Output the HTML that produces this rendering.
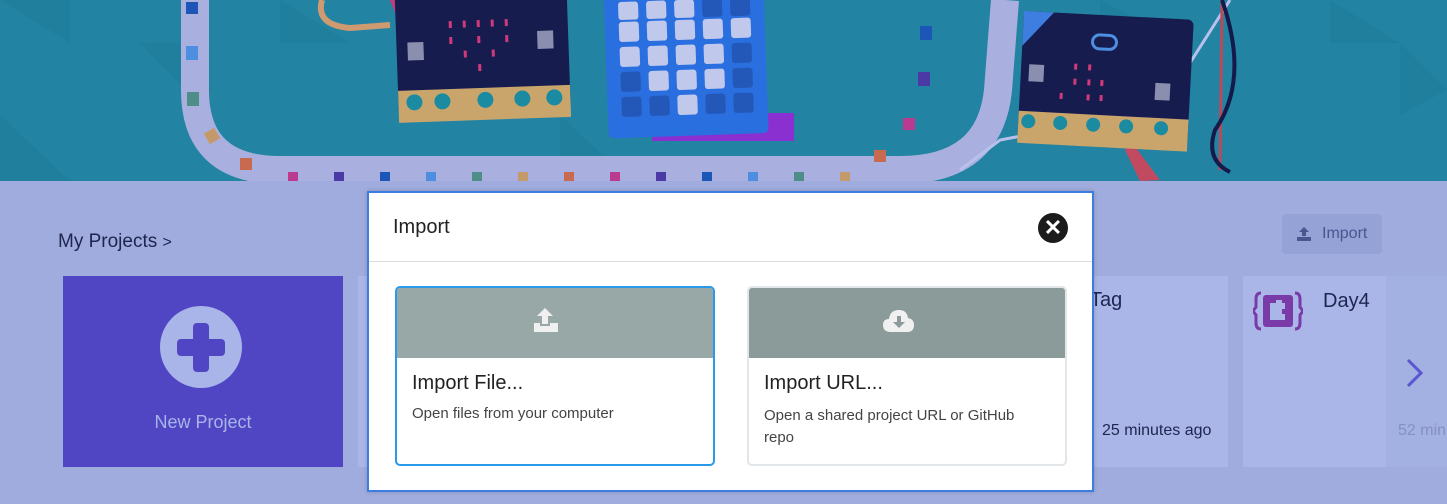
<!DOCTYPE html>
<html><head><meta charset="utf-8"><style>
*{margin:0;padding:0;box-sizing:border-box}
body{width:1447px;height:504px;overflow:hidden;background:#a0acdd;font-family:"Liberation Sans",sans-serif;position:relative}
.abs{position:absolute}
</style></head><body>
<svg class="abs" style="left:0;top:0" width="1447" height="181" viewBox="0 0 1447 181">
<rect width="1447" height="181" fill="#2284a2"/>
<g fill="#1f7e9b" opacity="0.8">
<path d="M0 0 L70 0 L70 43Z M140 43 L210 43 L210 115Z M1330 0 L1400 43 L1330 43Z M1400 43 L1447 90 L1400 115Z M560 115 L630 181 L560 181Z M1100 0 L1180 43 L1100 43Z M0 115 L70 181 L0 181Z M280 0 L350 43 L280 43Z"/>
</g>
<path d="M195 0 L195 90 Q195 170 280 170 L900 170 Q990 170 998 90 L1005 0" fill="none" stroke="#a9b0df" stroke-width="28"/>
<g>
<rect x="186" y="2" width="12" height="12" fill="#1c57b8"/><rect x="186" y="46" width="12" height="14" fill="#4d8ee0"/>
<rect x="187" y="92" width="12" height="14" fill="#4f8e88"/><rect x="206" y="130" width="12" height="12" fill="#c49a6b" transform="rotate(-30 212 136)"/>
<rect x="240" y="158" width="12" height="12" fill="#c76a50"/>
<rect x="288" y="172" width="10" height="9" fill="#b93a8e"/><rect x="334" y="172" width="10" height="9" fill="#4b3aa5"/><rect x="380" y="172" width="10" height="9" fill="#1c57b8"/><rect x="426" y="172" width="10" height="9" fill="#4d8ee0"/><rect x="472" y="172" width="10" height="9" fill="#4f8e88"/><rect x="518" y="172" width="10" height="9" fill="#c49a6b"/><rect x="564" y="172" width="10" height="9" fill="#c76a50"/><rect x="610" y="172" width="10" height="9" fill="#b93a8e"/><rect x="656" y="172" width="10" height="9" fill="#4b3aa5"/><rect x="702" y="172" width="10" height="9" fill="#1c57b8"/><rect x="748" y="172" width="10" height="9" fill="#4d8ee0"/><rect x="794" y="172" width="10" height="9" fill="#4f8e88"/><rect x="840" y="172" width="10" height="9" fill="#c49a6b"/>
<rect x="874" y="150" width="12" height="12" fill="#c76a50"/><rect x="903" y="118" width="12" height="12" fill="#b93a8e"/>
<rect x="918" y="72" width="12" height="14" fill="#4b3aa5"/><rect x="920" y="26" width="12" height="14" fill="#1c57b8"/>
</g>
<path d="M322 0 Q315 25 350 28 L390 25" fill="none" stroke="#d09a70" stroke-width="6"/>
<path d="M390 0 L420 0 L400 25Z" fill="#c43a7a"/>
<g transform="rotate(-2 480 60)">
<rect x="397" y="-10" width="172" height="120" rx="4" fill="#161c4e"/>
<rect x="397" y="88" width="172" height="32" fill="#c9a56b"/>
<circle cx="413" cy="100" r="8" fill="#1a8ba0"/><circle cx="441" cy="100" r="8" fill="#1a8ba0"/><circle cx="484" cy="100" r="8" fill="#1a8ba0"/><circle cx="521" cy="100" r="8" fill="#1a8ba0"/><circle cx="553" cy="100" r="8" fill="#1a8ba0"/>
<rect x="408" y="40" width="16" height="18" fill="#8a8fb0"/><rect x="538" y="33" width="16" height="18" fill="#8a8fb0"/>
<g fill="#d03a7a"><rect x="450" y="20" width="3" height="7"/><rect x="464" y="20" width="3" height="7"/><rect x="478" y="20" width="3" height="7"/><rect x="492" y="20" width="3" height="7"/><rect x="506" y="20" width="3" height="7"/><rect x="450" y="36" width="3" height="7"/><rect x="478" y="36" width="3" height="7"/><rect x="506" y="36" width="3" height="7"/><rect x="464" y="50" width="3" height="7"/><rect x="492" y="50" width="3" height="7"/><rect x="478" y="64" width="3" height="7"/></g>
</g>
<rect x="652" y="113" width="142" height="28" fill="#8a2fd0"/>
<g transform="rotate(-2 680 60)">
<rect x="606" y="-10" width="160" height="146" rx="5" fill="#2a6fe0"/>
<g fill="#c0c8ec">
<rect x="620" y="0" width="20" height="18" rx="3"/><rect x="648" y="0" width="20" height="18" rx="3"/><rect x="676" y="0" width="20" height="18" rx="3"/>
<rect x="620" y="20" width="20" height="20" rx="3"/><rect x="648" y="20" width="20" height="20" rx="3"/><rect x="676" y="20" width="20" height="20" rx="3"/><rect x="704" y="20" width="20" height="20" rx="3"/><rect x="732" y="20" width="20" height="20" rx="3"/>
<rect x="620" y="45" width="20" height="20" rx="3"/><rect x="648" y="45" width="20" height="20" rx="3"/><rect x="676" y="45" width="20" height="20" rx="3"/><rect x="704" y="45" width="20" height="20" rx="3"/>
<rect x="648" y="70" width="20" height="20" rx="3"/><rect x="676" y="70" width="20" height="20" rx="3"/><rect x="704" y="70" width="20" height="20" rx="3"/>
<rect x="676" y="95" width="20" height="20" rx="3"/></g>
<g fill="#2358b8"><rect x="704" y="0" width="20" height="18" rx="3"/><rect x="732" y="0" width="20" height="18" rx="3"/><rect x="732" y="45" width="20" height="20" rx="3"/><rect x="620" y="70" width="20" height="20" rx="3"/><rect x="732" y="70" width="20" height="20" rx="3"/><rect x="620" y="95" width="20" height="20" rx="3"/><rect x="648" y="95" width="20" height="20" rx="3"/><rect x="704" y="95" width="20" height="20" rx="3"/><rect x="732" y="95" width="20" height="20" rx="3"/></g>
</g>
<path d="M1230 0 L1160 110 L1000 140 L960 170" fill="none" stroke="#b8c0ec" stroke-width="3"/>
<path d="M1222 0 L1220 170" fill="none" stroke="#b84a5a" stroke-width="3"/>
<path d="M1222 0 Q1250 80 1215 130 Q1205 160 1230 172" fill="none" stroke="#141a4a" stroke-width="4"/>
<path d="M1130 140 L1160 180 L1140 181 L1125 150Z" fill="#c24a60"/>
<g transform="rotate(3 1100 90)">
<rect x="1020" y="15" width="170" height="130" rx="6" fill="#161c4e"/>
<rect x="1020" y="115" width="170" height="32" fill="#c9a56b"/>
<circle cx="1030" cy="125" r="7" fill="#1a8ba0"/><circle cx="1062" cy="125" r="7" fill="#1a8ba0"/><circle cx="1095" cy="125" r="7" fill="#1a8ba0"/><circle cx="1128" cy="125" r="7" fill="#1a8ba0"/><circle cx="1163" cy="125" r="7" fill="#1a8ba0"/>
<rect x="1028" y="68" width="15" height="17" fill="#8a8fb0"/><rect x="1155" y="80" width="15" height="17" fill="#8a8fb0"/>
<rect x="1090" y="35" width="24" height="14" rx="7" fill="none" stroke="#4d8ee0" stroke-width="3"/>
<path d="M1020 15 L1050 15 L1020 50Z" fill="#3d7ee0"/>
<g fill="#d03a7a"><rect x="1073" y="65" width="3" height="6"/><rect x="1087" y="65" width="3" height="6"/><rect x="1073" y="80" width="3" height="6"/><rect x="1087" y="80" width="3" height="6"/><rect x="1100" y="80" width="3" height="6"/><rect x="1060" y="95" width="3" height="6"/><rect x="1087" y="95" width="3" height="6"/><rect x="1100" y="95" width="3" height="6"/></g>
</g>
</svg>

<div class="abs" style="left:58px;top:231px;font-size:19px;color:#1e2550">My Projects <span style="font-size:16px">&gt;</span></div>
<div class="abs" style="left:1282px;top:214px;width:100px;height:40px;background:#95a2d6;border-radius:4px;color:#4a5590;font-size:16px;line-height:40px;padding-left:40px">Import</div>
<svg class="abs" style="left:1296px;top:226px" width="16" height="16" viewBox="0 0 16 16"><path d="M8 1 L13 6 H10 V10 H6 V6 H3Z M1 11 H15 V15 H1Z" fill="#4a5590"/></svg>
<div class="abs" style="left:63px;top:276px;width:280px;height:191px;background:#5046c4"></div>
<div class="abs" style="left:160px;top:306px;width:82px;height:82px;border-radius:50%;background:#a9b4e8"></div>
<div class="abs" style="left:177px;top:339px;width:48px;height:17px;border-radius:4px;background:#5046c4"></div>
<div class="abs" style="left:193px;top:323px;width:16px;height:49px;border-radius:4px;background:#5046c4"></div>
<div class="abs" style="left:63px;top:412px;width:280px;text-align:center;color:#a9b4e8;font-size:18px">New Project</div>
<div class="abs" style="left:358px;top:276px;width:870px;height:191px;background:#aab6e8"></div>
<div class="abs" style="left:1090px;top:289px;color:#1e2550;font-size:20px">Tag</div>
<div class="abs" style="left:1102px;top:422px;color:#1e2550;font-size:16px">25 minutes ago</div>
<div class="abs" style="left:1243px;top:276px;width:143px;height:191px;background:#aab6e8"></div>
<div class="abs" style="left:1386px;top:276px;width:61px;height:191px;background:#a3b0e2"></div>
<div class="abs" style="left:1323px;top:290px;color:#1e2550;font-size:20px">Day4</div>
<svg class="abs" style="left:1253px;top:291px" width="50" height="40" viewBox="0 0 50 40"><path d="M8 2 Q3 2 3 8 V16 L0 20 L3 24 V32 Q3 38 8 38" fill="none" stroke="#7a3aa8" stroke-width="3"/><path d="M42 2 Q47 2 47 8 V16 L50 20 L47 24 V32 Q47 38 42 38" fill="none" stroke="#7a3aa8" stroke-width="3"/><rect x="10" y="4" width="30" height="32" rx="3" fill="#7a3aa8"/><path d="M17 12 H23 V9 H29 V12 H32 V18 H29 V23 H32 V29 H17Z" fill="#aab6e8"/></svg>
<svg class="abs" style="left:1405px;top:358px" width="20" height="30" viewBox="0 0 20 30"><path d="M3 2 L16 15 L3 28" fill="none" stroke="#5a55d0" stroke-width="3"/></svg>
<div class="abs" style="left:1398px;top:422px;color:#8590c0;font-size:16px">52 min</div>

<div class="abs" style="left:367px;top:191px;width:727px;height:301px;background:#fff;border:2px solid #3b7de0;box-shadow:0 0 4px rgba(0,0,0,.2)">
<div class="abs" style="left:24px;top:23px;font-size:20px;color:#222">Import</div>
<div class="abs" style="left:669px;top:20px;width:30px;height:30px;border-radius:50%;background:#1b1b1b;color:#fff;text-align:center;font-size:22px;line-height:30px;font-weight:bold">✕</div>
<div class="abs" style="left:0;top:68px;width:723px;height:1px;background:#dcdcdc"></div>
<div class="abs" style="left:26px;top:93px;width:320px;height:180px;border:2px solid #2a9ae8;border-radius:5px;overflow:hidden">
 <div style="height:70px;background:#98a8a6"></div>
 <svg class="abs" style="left:135px;top:20px" width="30" height="26" viewBox="0 0 30 26"><path d="M13 0 L21 8 H16 V16 H10 V8 H5Z M2 15 H8 V18 H18 V15 H26 V24 H2Z" fill="#f0f0f0"/></svg>
 <div style="padding:14px 0 0 15px;font-size:20px;color:#222">Import File...</div>
 <div style="padding:10px 0 0 15px;font-size:15px;color:#444">Open files from your computer</div>
</div>
<div class="abs" style="left:378px;top:93px;width:320px;height:180px;border:2px solid #e2e6ea;border-radius:5px;overflow:hidden">
 <div style="height:70px;background:#8a9b99"></div>
 <svg class="abs" style="left:134px;top:20px" width="32" height="26" viewBox="0 0 32 26"><path d="M8 24 Q0 24 0 17 Q0 11 6 11 Q7 2 16 2 Q24 2 25 10 Q31 11 31 17 Q31 24 24 24Z" fill="#f0f0f0"/><path d="M14 8 H18 V14 H22 L16 20 L10 14 H14Z" fill="#8a9b99"/></svg>
 <div style="padding:14px 0 0 15px;font-size:20px;color:#222">Import URL...</div>
 <div style="padding:10px 0 0 15px;font-size:15px;color:#444;line-height:22px;width:290px">Open a shared project URL or GitHub repo</div>
</div>
</div>
</body></html>
